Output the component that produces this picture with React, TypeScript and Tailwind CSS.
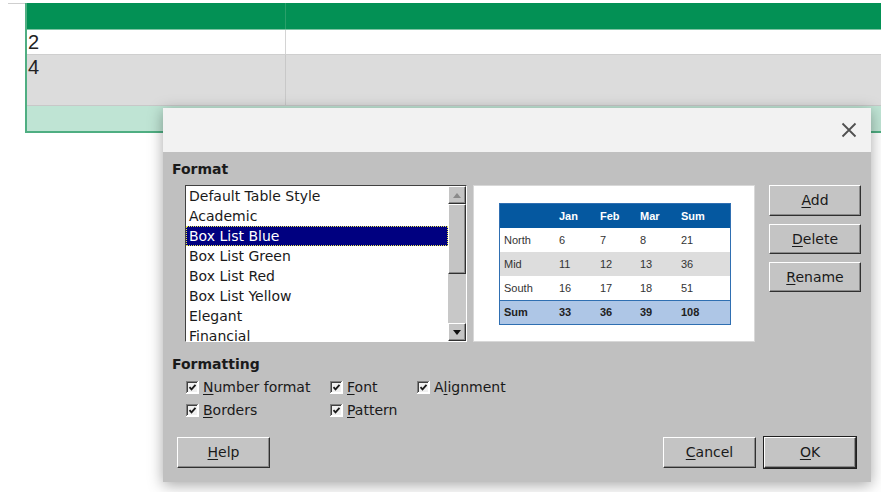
import type { ReactNode } from 'react';

const UI_FONT = { fontFamily: '"DejaVu Sans", "Liberation Sans", sans-serif' };
const SHEET_FONT = { fontFamily: '"Liberation Sans", Arial, sans-serif' };

const STYLES = [
  'Default Table Style',
  'Academic',
  'Box List Blue',
  'Box List Green',
  'Box List Red',
  'Box List Yellow',
  'Elegant',
  'Financial',
];

const PREVIEW_ROWS = [
  { label: 'North', values: ['6', '7', '8', '21'], bg: 'bg-white' },
  { label: 'Mid', values: ['11', '12', '13', '36'], bg: 'bg-[#dddddd]' },
  { label: 'South', values: ['16', '17', '18', '51'], bg: 'bg-white' },
];

// Label with one underlined access key
function Key({ pre = '', k, post = '' }: { pre?: string; k: string; post?: string }) {
  return (
    <span>
      {pre}
      <span className="underline underline-offset-2">{k}</span>
      {post}
    </span>
  );
}

function Button({ children, isDefault = false, className = '' }: { children: ReactNode; isDefault?: boolean; className?: string }) {
  return (
    <button
      className={`flex items-center justify-center bg-[#c4c4c4] text-[14px] text-[#1a1a1a] border border-t-white border-l-white border-r-[#303030] border-b-[#303030] shadow-[inset_-1px_-1px_0_#8a8a8a] ${isDefault ? 'outline outline-1 outline-[#202020]' : ''} ${className}`}
    >
      {children}
    </button>
  );
}

function CheckBox({ children }: { children: ReactNode }) {
  return (
    <label className="flex items-center gap-[4px] h-[20px] text-[14px] text-[#1a1a1a]">
      <svg width="13" height="13" viewBox="0 0 13 13" className="shrink-0">
        <rect x="0" y="0" width="13" height="13" fill="#ffffff" />
        <rect x="0" y="0" width="12" height="12" fill="#808080" />
        <rect x="1" y="1" width="11" height="11" fill="#ffffff" />
        <rect x="1" y="1" width="10" height="10" fill="#404040" />
        <rect x="2" y="2" width="9" height="9" fill="#f0f0f0" />
        <path d="M3.5 6.2 L5.5 8.3 L9.5 3.8" stroke="#1a1a1a" strokeWidth="1.8" fill="none" />
      </svg>
      {children}
    </label>
  );
}

function ScrollArrow({ up, disabled }: { up: boolean; disabled?: boolean }) {
  return (
    <div className="h-[18px] w-[18px] flex items-center justify-center bg-[#c4c4c4] border border-t-white border-l-white border-r-[#303030] border-b-[#303030] shadow-[inset_-1px_-1px_0_#8a8a8a]">
      <svg width="8" height="5" viewBox="0 0 8 5">
        <path d={up ? 'M0 5 L4 0 L8 5 Z' : 'M0 0 L4 5 L8 0 Z'} fill={disabled ? '#8a8a8a' : '#101010'} />
      </svg>
    </div>
  );
}

function Spreadsheet() {
  return (
    <div className="pt-[3px] relative" style={SHEET_FONT}>
      <div className="absolute left-[8px] top-[3px] w-[17px] h-px bg-[#cfcfcf]" />
      <div className="ml-[25px] border-l-2 border-b-2 border-[#4fae82]">
        <div className="grid grid-cols-[259px_1fr] h-[27px] bg-[#039155] border-b border-[#7fc3a3]">
          <div className="border-r border-[#2aa06a]" />
          <div />
        </div>
        <div className="grid grid-cols-[259px_1fr] h-[25px] bg-white border-b border-[#cfcfcf] text-[20px] leading-[24px] text-[#222]">
          <div className="border-r border-[#d4d4d4] pl-[1px]">2</div>
          <div />
        </div>
        <div className="grid grid-cols-[259px_1fr] h-[51px] bg-[#dcdcdc] border-b border-[#c8c8c8] text-[20px] leading-[24px] text-[#222]">
          <div className="border-r border-[#c8c8c8] pl-[1px]">4</div>
          <div />
        </div>
        <div className="h-[25px] bg-[#bfe4d4]" />
      </div>
    </div>
  );
}

function Preview() {
  return (
    <div className="w-[282px] h-[157px] bg-white border border-[#d8d8d8] pt-[17px] pl-[25px]" style={SHEET_FONT}>
      <div className="w-[232px] border border-[#2f6fb2] text-[11px] text-[#333]">
        <div className="grid grid-cols-[59px_41px_40px_41px_1fr] h-[24px] items-center bg-[#0558a0] text-white font-bold">
          <div />
          <div>Jan</div>
          <div>Feb</div>
          <div>Mar</div>
          <div>Sum</div>
        </div>
        {PREVIEW_ROWS.map((r) => (
          <div key={r.label} className={`grid grid-cols-[59px_41px_40px_41px_1fr] h-[24px] items-center ${r.bg}`}>
            <div className="pl-[4px]">{r.label}</div>
            {r.values.map((v, i) => (
              <div key={i}>{v}</div>
            ))}
          </div>
        ))}
        <div className="grid grid-cols-[59px_41px_40px_41px_1fr] h-[24px] items-center bg-[#aec6e6] border-t border-[#2f6fb2] font-bold text-[#222]">
          <div className="pl-[4px]">Sum</div>
          <div>33</div>
          <div>36</div>
          <div>39</div>
          <div>108</div>
        </div>
      </div>
    </div>
  );
}

function StyleList() {
  return (
    <div className="w-[282px] h-[157px] flex border border-t-[#404040] border-l-[#404040] border-r-white border-b-white bg-white overflow-hidden">
      <div className="flex-1 overflow-hidden text-[14px] leading-[20px] text-[#1a1a1a]">
        {STYLES.map((s, i) =>
          i === 2 ? (
            <div key={s} className="h-[20px] bg-[#000080] text-white pl-[3px] outline-1 outline-dotted outline-[#e8e850] -outline-offset-1">
              {s}
            </div>
          ) : (
            <div key={s} className="h-[20px] pl-[3px] whitespace-nowrap">
              {s}
            </div>
          )
        )}
      </div>
      <div className="w-[18px] flex flex-col bg-[#c8c8c8]">
        <ScrollArrow up disabled />
        <div className="h-[70px] bg-[#c4c4c4] border border-t-white border-l-white border-r-[#303030] border-b-[#303030] shadow-[inset_-1px_-1px_0_#8a8a8a]" />
        <div className="flex-1" />
        <ScrollArrow up={false} />
      </div>
    </div>
  );
}

export default function App() {
  return (
    <div className="relative w-[881px] h-[492px] bg-white overflow-hidden" style={UI_FONT}>
      <Spreadsheet />

      {/* Dialog */}
      <div className="absolute left-[163px] top-[108px] w-[708px] h-[374px] flex flex-col shadow-[0_3px_14px_rgba(0,0,0,0.35)]">
        <div className="h-[44px] shrink-0 bg-[#f2f2f2] flex items-center justify-end pr-[14px]">
          <svg width="16" height="16" viewBox="0 0 16 16">
            <path d="M1.5 1.5 L14.5 14.5 M14.5 1.5 L1.5 14.5" stroke="#505050" strokeWidth="1.8" />
          </svg>
        </div>

        <div className="flex-1 bg-[#c0c0c0] flex flex-col text-[#1a1a1a]">
          <div className="mt-[7px] pl-[9px] h-[20px] leading-[20px] text-[14px] font-bold">Format</div>

          <div className="mt-[6px] pl-[22px] flex items-start">
            <StyleList />
            <div className="ml-[6px]">
              <Preview />
            </div>
            <div className="ml-[14px] flex flex-col gap-[8px]">
              <Button className="w-[92px] h-[31px]">
                <Key k="A" post="dd" />
              </Button>
              <Button className="w-[92px] h-[30px]">
                <Key k="D" post="elete" />
              </Button>
              <Button className="w-[92px] h-[30px]">
                <Key k="R" post="ename" />
              </Button>
            </div>
          </div>

          <div className="mt-[12px] pl-[9px] h-[20px] leading-[20px] text-[14px] font-bold">Formatting</div>

          <div className="mt-[3px] pl-[23px] grid grid-cols-[144px_87px_auto] gap-y-[3px] w-max">
            <CheckBox>
              <Key k="N" post="umber format" />
            </CheckBox>
            <CheckBox>
              <Key k="F" post="ont" />
            </CheckBox>
            <CheckBox>
              <Key pre="A" k="l" post="ignment" />
            </CheckBox>
            <CheckBox>
              <Key k="B" post="orders" />
            </CheckBox>
            <CheckBox>
              <Key k="P" post="attern" />
            </CheckBox>
          </div>

          <div className="mt-[17px] pl-[14px] pr-[15px] flex items-center">
            <Button className="w-[93px] h-[31px]">
              <Key k="H" post="elp" />
            </Button>
            <div className="flex-1" />
            <Button className="w-[93px] h-[31px]">
              <Key k="C" post="ancel" />
            </Button>
            <Button isDefault className="ml-[8px] w-[92px] h-[31px]">
              <Key k="O" post="K" />
            </Button>
          </div>
        </div>
      </div>
    </div>
  );
}
